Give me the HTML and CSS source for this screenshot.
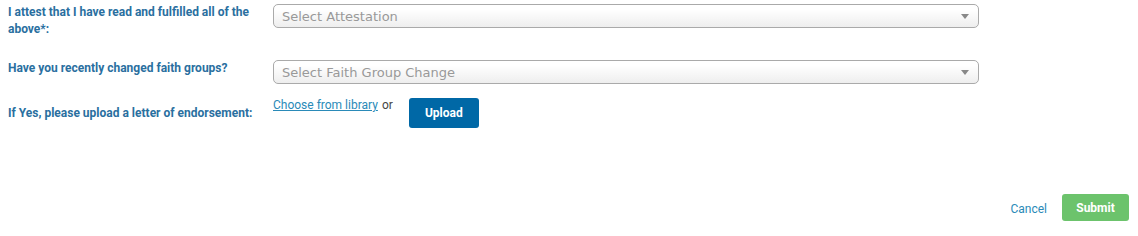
FILE: index.html
```html
<!DOCTYPE html>
<html lang="en">
<head>
    <meta charset="UTF-8">
    <meta name="viewport" content="width=device-width, initial-scale=1.0">
    <title>Attestation</title>
    <link rel="stylesheet" href="styles.css">
</head>
<body>
    <div class="form">
        <div class="row row-first">
            <label class="label">I attest that I have read and fulfilled all of the above*:</label>
            <div class="field">
                <div class="select">
                    <span class="placeholder">Select Attestation</span>
                    <span class="arrow"></span>
                </div>
            </div>
        </div>
        <div class="row row-second">
            <label class="label">Have you recently changed faith groups?</label>
            <div class="field">
                <div class="select">
                    <span class="placeholder">Select Faith Group Change</span>
                    <span class="arrow"></span>
                </div>
            </div>
        </div>
        <div class="row row-upload">
            <label class="label label-upload">If Yes, please upload a letter of endorsement:</label>
            <div class="field upload">
                <a href="#" class="link">Choose from library</a><span class="or">or</span>
                <button class="btn btn-blue">Upload</button>
            </div>
        </div>
        <div class="actions">
            <a href="#" class="cancel">Cancel</a>
            <button class="btn btn-green">Submit</button>
        </div>
    </div>
</body>
</html>
```

FILE: styles.css
```css
body {
    margin: 0;
    background-color: white;
    font-family: Roboto, Arial, sans-serif;
    font-size: 12px;
}
.form {
    padding: 4px 9px 0 8px;
}
.row {
    display: flex;
    align-items: flex-start;
    margin-bottom: 22px;
}
.row-second {
    margin-bottom: 14px;
}
.label {
    width: 265px;
    flex-shrink: 0;
    color: #2a6f9f;
    font-weight: bold;
    line-height: 17px;
}
.label-upload {
    padding-top: 7px;
}
.field {
    width: 706px;
}
.select {
    display: flex;
    align-items: center;
    justify-content: space-between;
    height: 22px;
    border: 1px solid #aaa;
    border-radius: 5px;
    background: linear-gradient(to bottom, #ffffff 20%, #eeeeee 100%);
    padding: 0 9px 0 8px;
}
.placeholder {
    font-family: "DejaVu Sans", Verdana, sans-serif;
    font-size: 13px;
    color: #999;
}
.arrow {
    width: 0;
    height: 0;
    border-left: 4px solid transparent;
    border-right: 4px solid transparent;
    border-top: 5px solid #888;
}
.upload {
    display: flex;
    align-items: flex-start;
}
.link {
    color: #2a8ab8;
    text-decoration: underline;
    line-height: 14px;
}
.or {
    color: #444;
    margin-left: 4px;
    line-height: 14px;
}
.btn {
    border: none;
    border-radius: 3px;
    color: white;
    font-family: Roboto, Arial, sans-serif;
    font-weight: bold;
    font-size: 12px;
    cursor: pointer;
}
.btn-blue {
    background-color: #0068a6;
    width: 70px;
    height: 30px;
    margin-left: 16px;
}
.actions {
    display: flex;
    justify-content: flex-end;
    align-items: center;
    gap: 15px;
    margin-top: 66px;
}
.cancel {
    color: #2a8ab8;
    text-decoration: none;
    padding-top: 3px;
}
.btn-green {
    background-color: #6cc36c;
    width: 67px;
    height: 27px;
}
```
